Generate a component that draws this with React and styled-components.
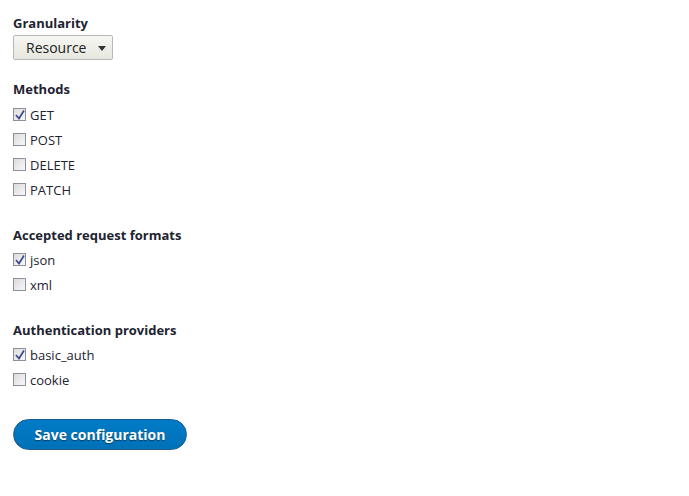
import React from "react";
import styled, { createGlobalStyle } from "styled-components";

const GlobalStyle = createGlobalStyle`
  html, body {
    margin: 0;
    padding: 0;
    background: #fff;
  }
  body {
    font-family: "Open Sans", "Noto Sans", "DejaVu Sans", sans-serif;
    color: #222330;
  }
`;

const Page = styled.form`
  padding: 14px 13px 0 13px;
  display: flex;
  flex-direction: column;
`;

const Group = styled.fieldset`
  border: 0;
  margin: 0 0 ${(p) => p.$gap || 21}px 0;
  padding: 0;
  min-width: 0;
`;

const Legend = styled.div`
  font-size: 13px;
  font-weight: 700;
  line-height: 18px;
  color: #222330;
  margin-bottom: ${(p) => p.$space || 3}px;
`;

const SelectBox = styled.div`
  box-sizing: content-box;
  width: 80px;
  height: 23px;
  border: 1px solid #b8b8b8;
  border-radius: 2px;
  background: linear-gradient(to bottom, #f6f6f3, #e7e7df);
  display: flex;
  align-items: center;
  justify-content: space-between;
  padding: 0 6px 0 12px;
  font-size: 14px;
  color: #222;
`;

const Arrow = styled.span`
  width: 0;
  height: 0;
  border-left: 4px solid transparent;
  border-right: 4px solid transparent;
  border-top: 5px solid #333;
  margin-top: 2px;
`;

const Options = styled.div`
  display: flex;
  flex-direction: column;
`;

const Option = styled.label`
  display: flex;
  align-items: center;
  height: 25px;
  font-size: 13px;
  color: #222330;
`;

const Box = styled.span`
  width: 11px;
  height: 11px;
  border: 1px solid #8f8f9d;
  background: linear-gradient(135deg, #dcdcdc, #f7f7f7);
  margin-right: 4px;
  display: flex;
  align-items: center;
  justify-content: center;
  flex: none;
`;

const Button = styled.button`
  align-self: flex-start;
  margin-top: 4px;
  width: 174px;
  height: 31px;
  border-radius: 16px;
  border: 1px solid #1e5c90;
  background: linear-gradient(to bottom, #007bc6, #0071b8);
  color: #fff;
  font-family: "Open Sans", "Noto Sans", sans-serif;
  font-size: 14px;
  font-weight: 700;
  text-shadow: 0 1px 1px rgba(0, 0, 0, 0.5);
  padding: 0;
`;

const Checkbox = ({ checked, children }) => (
  <Option>
    <Box>
      {checked && (
        <svg width="10" height="10" viewBox="0 0 10 10">
          <path d="M1 5 L4 8.5 L9 0.5" fill="none" stroke="#3b4a8f" strokeWidth="1.7" />
        </svg>
      )}
    </Box>
    {children}
  </Option>
);

export default function App() {
  return (
    <>
      <GlobalStyle />
      <Page onSubmit={(e) => e.preventDefault()}>
        <Group $gap={20}>
          <Legend $space={3}>Granularity</Legend>
          <SelectBox>
            Resource
            <Arrow />
          </SelectBox>
        </Group>
        <Group $gap={24}>
          <Legend $space={4}>Methods</Legend>
          <Options>
            <Checkbox checked>GET</Checkbox>
            <Checkbox>POST</Checkbox>
            <Checkbox>DELETE</Checkbox>
            <Checkbox>PATCH</Checkbox>
          </Options>
        </Group>
        <Group $gap={24}>
          <Legend>Accepted request formats</Legend>
          <Options>
            <Checkbox checked>json</Checkbox>
            <Checkbox>xml</Checkbox>
          </Options>
        </Group>
        <Group $gap={23}>
          <Legend>Authentication providers</Legend>
          <Options>
            <Checkbox checked>basic_auth</Checkbox>
            <Checkbox>cookie</Checkbox>
          </Options>
        </Group>
        <Button type="submit">Save configuration</Button>
      </Page>
    </>
  );
}
